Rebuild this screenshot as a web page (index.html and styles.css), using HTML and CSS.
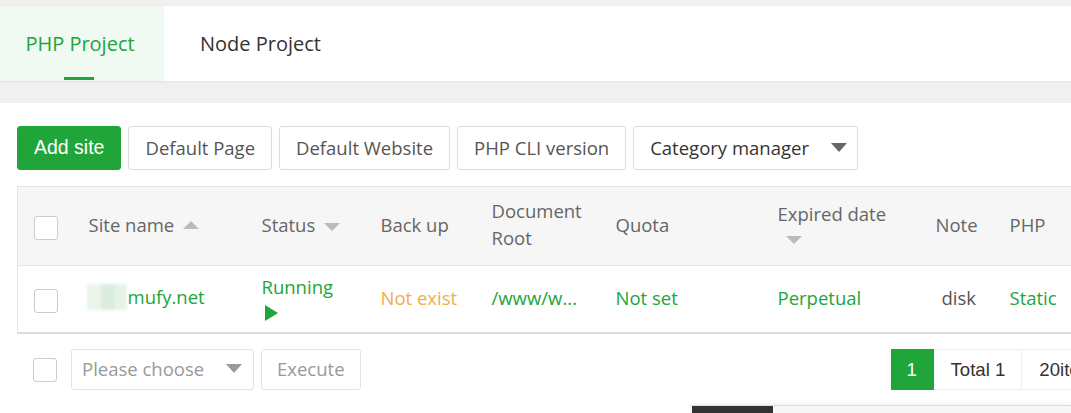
FILE: index.html
```html
<!DOCTYPE html>
<html>
<head>
<meta charset="utf-8">
<link rel="stylesheet" href="styles.css">
</head>
<body>
<div class="tabs">
  <div class="tab active">PHP Project</div>
  <div class="tab">Node Project</div>
</div>
<div class="panel">
  <div class="toolbar">
    <button class="btn btn-primary">Add site</button>
    <button class="btn">Default Page</button>
    <button class="btn">Default Website</button>
    <button class="btn">PHP CLI version</button>
    <button class="btn btn-drop">Category manager <span class="caret caret-dark"></span></button>
  </div>
  <div class="table-wrap">
    <table class="sites">
      <colgroup>
        <col class="c-chk"><col class="c-site"><col class="c-status"><col class="c-backup"><col class="c-root"><col class="c-quota"><col class="c-exp"><col class="c-note"><col class="c-php">
      </colgroup>
      <thead>
        <tr>
          <th><span class="chk"></span></th>
          <th>Site name <span class="sort up"></span></th>
          <th>Status <span class="sort down"></span></th>
          <th>Back up</th>
          <th class="th-root">Document Root</th>
          <th>Quota</th>
          <th>Expired date<span class="sort down block"></span></th>
          <th>Note</th>
          <th>PHP</th>
        </tr>
      </thead>
      <tbody>
        <tr>
          <td><span class="chk"></span></td>
          <td class="green"><span class="blur"></span>mufy.net</td>
          <td class="green">Running<svg class="play" width="13" height="16" viewBox="0 0 13 16"><path d="M0 0L13 8L0 16Z" fill="#20a53a"/></svg></td>
          <td class="orange">Not exist</td>
          <td class="green">/www/w...</td>
          <td class="green">Not set</td>
          <td class="green">Perpetual</td>
          <td class="note">disk</td>
          <td class="green">Static</td>
        </tr>
      </tbody>
    </table>
  </div>
  <div class="footer">
    <span class="chk"></span>
    <div class="select">Please choose <span class="caret"></span></div>
    <button class="btn btn-exec">Execute</button>
    <div class="pager">
      <span class="page current">1</span>
      <span class="page">Total 1</span>
      <span class="page">20items/page</span>
    </div>
  </div>
</div>
<div class="dock"><span class="dock-dark"></span></div>
</body>
</html>
```

FILE: styles.css
```css
html, body {
  margin: 0;
  padding: 0;
}
body {
  background: #f0f0f0;
  font-family: "Open Sans", "Noto Sans", sans-serif;
  font-size: 18.5px;
  color: #555;
  overflow: hidden;
  width: 1071px;
  height: 413px;
  position: relative;
}
.tabs {
  margin-top: 6px;
  height: 75px;
  background: #fff;
  display: flex;
  box-shadow: 0 1px 2px rgba(0,0,0,0.06);
}
.tab {
  font-size: 20px;
  color: #333;
  display: flex;
  align-items: center;
  padding-left: 36px;
  position: relative;
}
.tab.active {
  width: 164px;
  padding-left: 0;
  padding-right: 4px;
  box-sizing: border-box;
  justify-content: center;
  background: #f1f9f3;
  color: #20a53a;
}
.tab.active::after {
  content: "";
  position: absolute;
  bottom: 1px;
  left: 64px;
  width: 30px;
  height: 3px;
  background: #20a53a;
}
.panel {
  margin-top: 22px;
  background: #fff;
  padding: 23px 0 30px 17px;
  width: 1300px;
  height: 400px;
}
.toolbar {
  display: flex;
  gap: 7px;
  height: 44px;
}
.btn {
  font-family: "Open Sans", "Noto Sans", sans-serif;
  font-size: 18.5px;
  color: #555;
  background: #fff;
  border: 1px solid #ddd;
  border-radius: 3px;
  height: 44px;
  padding: 0 16px 2px;
  display: flex;
  align-items: center;
  margin: 0;
}
.btn-primary {
  background: #20a53a;
  border-color: #20a53a;
  color: #fff;
  font-family: "Liberation Sans", Arial, sans-serif;
  font-size: 19.5px;
}
.btn-drop {
  color: #333;
  padding-right: 10px;
}
.caret {
  display: inline-block;
  width: 0;
  height: 0;
  border-left: 8px solid transparent;
  border-right: 8px solid transparent;
  border-top: 9px solid #999;
  margin-left: 22px;
}
.caret-dark {
  border-top-color: #666;
}
.table-wrap {
  margin-top: 16px;
}
.sites {
  border-collapse: collapse;
  table-layout: fixed;
  width: 1180px;
  border-left: 1px solid #e4e4e4;
  border-top: 1px solid #e4e4e4;
  border-bottom: 2px solid #ddd;
}
.c-chk { width: 53px; }
.c-site { width: 173px; }
.c-status { width: 119px; }
.c-backup { width: 111px; }
.c-root { width: 124px; }
.c-quota { width: 162px; }
.c-exp { width: 158px; }
.c-note { width: 74px; }
.c-php { width: 206px; }
.sites th {
  background: #f6f6f6;
  color: #666;
  font-weight: normal;
  text-align: left;
  height: 74px;
  padding: 0 10px 4px 18px;
  line-height: 27px;
  border-bottom: 1px solid #e6e6e6;
  vertical-align: middle;
}
.sites th:first-child, .sites td:first-child {
  padding-left: 16px;
  padding-right: 0;
  padding-bottom: 0;
}
.sites td {
  height: 62px;
  padding: 0 10px 4px 18px;
  line-height: 25px;
  vertical-align: middle;
  white-space: nowrap;
}
.chk {
  display: inline-block;
  width: 22px;
  height: 22px;
  border: 1px solid #ccc;
  border-radius: 3px;
  background: #fff;
  vertical-align: middle;
}
.sort {
  display: inline-block;
  width: 0;
  height: 0;
  border-left: 8px solid transparent;
  border-right: 8px solid transparent;
  vertical-align: middle;
  margin-left: 4px;
}
.sort.up {
  border-bottom: 8px solid #bbb;
  margin-top: -4px;
}
.sort.down {
  border-top: 8px solid #bbb;
}
.sort.block {
  display: block;
  margin: 9px 0 5px 8px;
}
.green { color: #20a53a; }
.orange { color: #f0ad4e; }
.note { color: #555; padding-left: 24px !important; }
.play {
  display: block;
  margin: 6px 0 0 3px;
}
.blur {
  display: inline-block;
  width: 40px;
  height: 26px;
  vertical-align: middle;
  margin: -4px 1px 0 -2px;
  background: linear-gradient(90deg, #eaf5ec 0 35%, #dbeddf 35% 70%, #e6f2e8 70% 100%);
  filter: blur(1.5px);
}
.footer {
  display: flex;
  align-items: center;
  margin-top: 15px;
  height: 41px;
  padding-left: 16px;
}
.footer .chk {
  margin-right: 14px;
}
.select {
  width: 183px;
  height: 41px;
  box-sizing: border-box;
  border: 1px solid #e2e2e2;
  border-radius: 3px;
  color: #999;
  display: flex;
  align-items: center;
  padding-left: 10px;
  padding-bottom: 2px;
}
.select .caret {
  margin-left: auto;
  margin-right: 11px;
}
.btn-exec {
  height: 41px;
  margin-left: 7px;
  padding: 0 15px 2px;
  color: #999;
  border-color: #e2e2e2;
}
.pager {
  margin-left: 530px;
  display: flex;
  font-family: "Liberation Sans", Arial, sans-serif;
  font-size: 18.6px;
  color: #333;
}
.page {
  height: 41px;
  box-sizing: border-box;
  display: flex;
  align-items: center;
  padding: 0 16px 0 17px;
  border: 1px solid #eee;
  border-left: none;
}
.page.current {
  background: #20a53a;
  border-color: #20a53a;
  color: #fff;
  width: 43px;
  justify-content: center;
  padding: 0;
}
.dock {
  position: absolute;
  left: 690px;
  top: 405px;
  width: 381px;
  height: 8px;
  background: #f7f7f7;
  border-top: 1px solid #ddd;
  box-shadow: 0 -2px 4px rgba(0,0,0,0.05);
}
.dock-dark {
  display: block;
  margin-left: 2px;
  width: 81px;
  height: 8px;
  background: #333;
}
```
